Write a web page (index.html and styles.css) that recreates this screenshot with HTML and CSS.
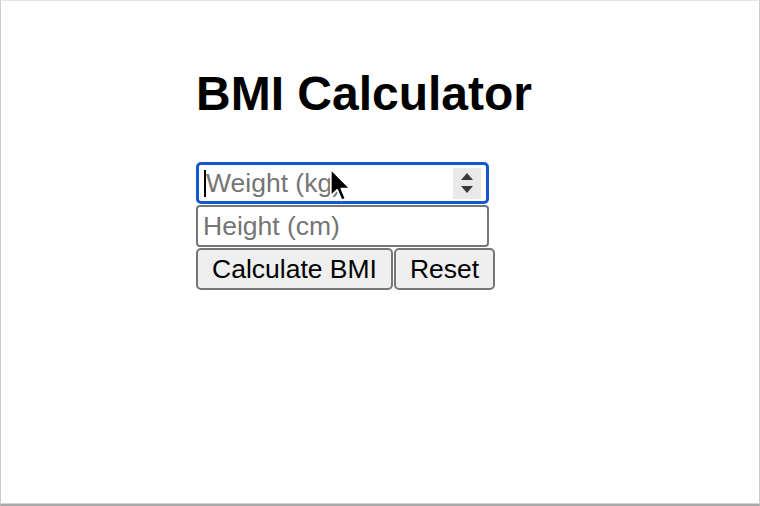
FILE: index.html
```html
<!DOCTYPE html>
<html lang="en">
<head>
<meta charset="utf-8">
<title>BMI Calculator</title>
<link rel="stylesheet" href="styles.css">
</head>
<body>
<div class="frame">
  <main class="app">
    <h1 class="title">BMI Calculator</h1>
    <div class="form">
      <div class="field field-focused">
        <span class="caret"></span>
        <input class="field-input" type="text" placeholder="Weight (kg)">
        <span class="spinner">
          <span class="tri tri-up"></span>
          <span class="tri tri-down"></span>
        </span>
        <svg class="pointer" width="23" height="36" viewBox="0 0 13 20" aria-hidden="true">
          <path d="M1,1 L1,16.2 L4.6,12.8 L7.1,18.7 L9.4,17.7 L7,12 L12,12 Z" fill="#000" stroke="#fff" stroke-width="1" stroke-linejoin="round"/>
        </svg>
      </div>
      <div class="field">
        <input class="field-input" type="text" placeholder="Height (cm)">
      </div>
      <div class="buttons">
        <button class="btn btn-calc" type="button">Calculate BMI</button>
        <button class="btn btn-reset" type="button">Reset</button>
      </div>
    </div>
  </main>
</div>
</body>
</html>
```
FILE: styles.css
```css
html, body {
  margin: 0;
  padding: 0;
  background: #ffffff;
}

.frame {
  box-sizing: border-box;
  width: 760px;
  height: 506px;
  border-top: 1px solid #e4e4e4;
  border-left: 1px solid #cdcdcd;
  border-right: 1px solid #cdcdcd;
  border-bottom: 2px solid #a9a9a9;
  box-shadow: inset 0 -1px 0 #d4d4d4;
  overflow: hidden;
  font-family: "Liberation Sans", Arial, Helvetica, sans-serif;
}

.app {
  padding: 65px 0 0 195px;
}

.title {
  margin: 0;
  font-size: 48px;
  line-height: 55px;
  font-weight: bold;
  color: #000;
}

.form {
  margin-top: 41px;
  display: flex;
  flex-direction: column;
  gap: 1px;
  align-items: flex-start;
}

.field {
  position: relative;
  box-sizing: border-box;
  width: 293px;
  height: 42px;
  display: flex;
  align-items: center;
  border: 2px solid #767676;
  border-radius: 4px;
  background: #fff;
  padding: 0 6px 0 5px;
}

.field-focused {
  border: 3px solid #1458cc;
  border-radius: 5px;
  padding: 0 5px 0 5px;
}

.field-input {
  flex: 1;
  min-width: 0;
  border: 0;
  outline: none;
  padding: 0;
  margin: 0;
  background: transparent;
  font-family: "Liberation Sans", Arial, Helvetica, sans-serif;
  font-size: 26.5px;
  color: #000;
}

.field-input::placeholder {
  color: #757575;
}

.field-focused .field-input {
  padding-left: 2px;
}

.caret {
  position: absolute;
  left: 5px;
  top: 5px;
  width: 2px;
  height: 27px;
  background: #000;
}

.spinner {
  box-sizing: border-box;
  width: 28px;
  height: 31px;
  background: #e9e9e9;
  display: flex;
  flex-direction: column;
  align-items: center;
  justify-content: center;
  gap: 6px;
}

.tri {
  width: 0;
  height: 0;
  border-left: 6px solid transparent;
  border-right: 6px solid transparent;
}

.tri-up {
  border-bottom: 7px solid #3a3a3a;
}

.tri-down {
  border-top: 7px solid #3a3a3a;
}

.pointer {
  position: absolute;
  left: 130px;
  top: 2px;
}

.buttons {
  display: flex;
  gap: 1px;
}

.btn {
  box-sizing: border-box;
  height: 42px;
  margin: 0;
  padding: 0;
  border: 2px solid #767676;
  border-radius: 5px;
  background: #efefef;
  color: #000;
  font-family: "Liberation Sans", Arial, Helvetica, sans-serif;
  font-size: 26.5px;
  line-height: 1;
}

.btn-calc {
  width: 197px;
}

.btn-reset {
  width: 101px;
}
```
